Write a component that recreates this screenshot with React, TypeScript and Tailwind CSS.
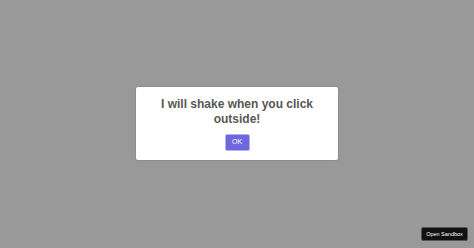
export default function App() {
  return (
    <div className="w-[474px] h-[248px] bg-[#999999] relative flex items-center justify-center overflow-hidden" style={{ fontFamily: '"Liberation Sans", Arial, sans-serif' }}>
      <div className="w-[202px] h-[73px] bg-white rounded-[2px] shadow-[0_0_2px_rgba(0,0,0,0.25)] flex flex-col items-center pt-[10px] -mt-[1px]">
        <h2 className="text-[12px] leading-[15px] font-bold text-[#575757] text-center w-[180px]">
          I will shake when you click outside!
        </h2>
        <button className="mt-[7px] w-[25px] h-[17px] bg-[#7066e0] text-white text-[7px] rounded-[2px] border border-[#b6b0f0] flex items-center justify-center">
          OK
        </button>
      </div>
      <div className="absolute right-[6px] bottom-[7px] w-[47px] h-[14px] bg-[#111] border border-[#555] rounded-[2px] text-white text-[5.5px] flex items-center justify-center">
        Open Sandbox
      </div>
    </div>
  );
}
